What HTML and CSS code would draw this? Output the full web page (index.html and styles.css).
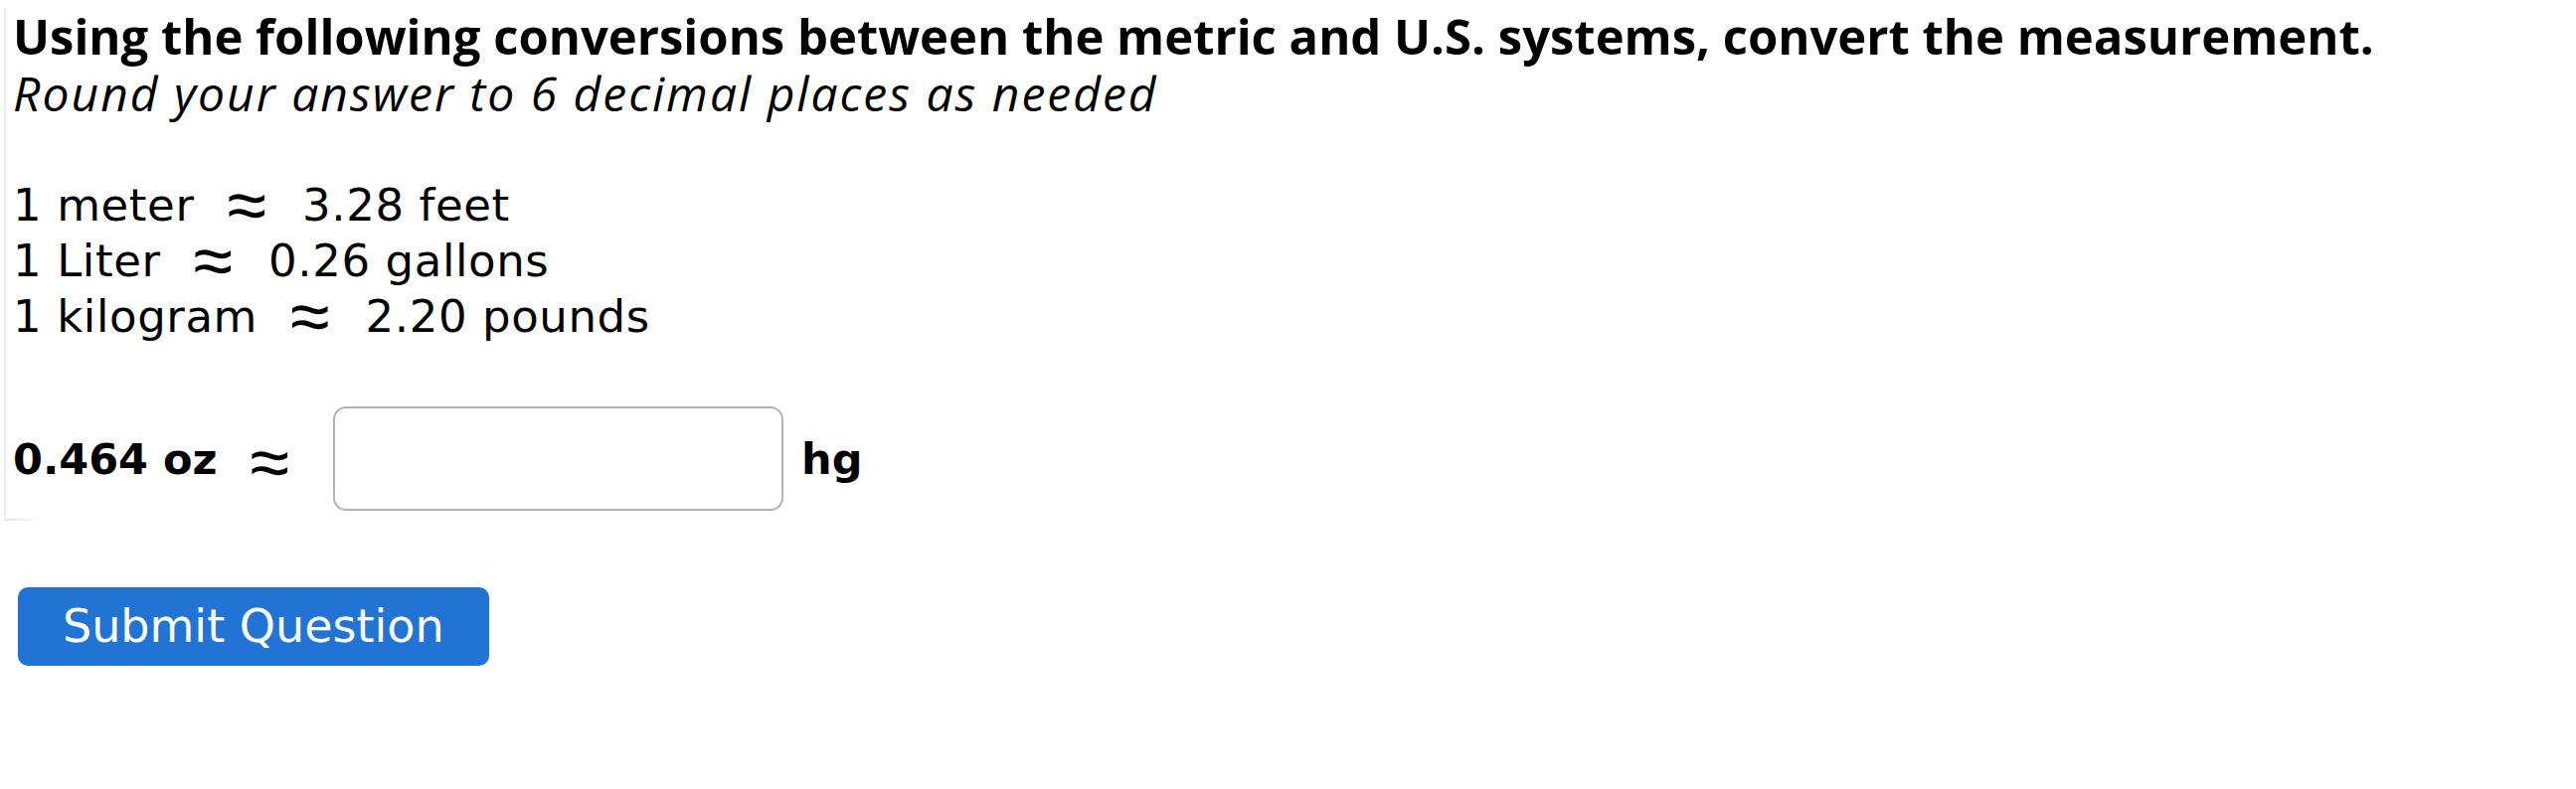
FILE: index.html
```html
<!DOCTYPE html>
<html>
<head>
<meta charset="utf-8">
<link rel="stylesheet" href="styles.css">
</head>
<body>
<div class="question">
  <div class="prompt">
    <div class="title">Using the following conversions between the metric and U.S. systems, convert the measurement.</div>
    <div class="hint">Round your answer to 6 decimal places as needed</div>
  </div>
  <div class="facts">
    <div class="fact">1 meter<span class="approx">≈</span>3.28 feet</div>
    <div class="fact">1 Liter<span class="approx">≈</span>0.26 gallons</div>
    <div class="fact">1 kilogram<span class="approx">≈</span>2.20 pounds</div>
  </div>
  <div class="answer-row">
    <span class="given">0.464 oz</span>
    <span class="approx approx-row">≈</span>
    <input class="answer" type="text" aria-label="answer">
    <span class="unit">hg</span>
  </div>
</div>
<div class="actions">
  <button class="submit" type="button">Submit Question</button>
</div>
</body>
</html>
```

FILE: styles.css
```css
html, body {
  margin: 0;
  padding: 0;
  background: #ffffff;
  color: #000000;
}

.question {
  margin: 8px 0 0 4px;
  border-left: 2px solid #ececec;
  padding: 0 0 10px 7px;
  position: relative;
}

.question::after {
  content: "";
  position: absolute;
  left: 0;
  bottom: 0;
  width: 34px;
  height: 2px;
  background: linear-gradient(to right, #e4e4e4, rgba(236,236,236,0));
}

.title {
  font-family: "Open Sans", "Noto Sans", sans-serif;
  font-weight: 700;
  font-size: 49px;
  line-height: 57px;
  white-space: nowrap;
}

.hint {
  font-family: "Open Sans", "Noto Sans", sans-serif;
  font-style: italic;
  font-size: 48px;
  letter-spacing: 2px;
  line-height: 57px;
  white-space: nowrap;
}

.facts {
  margin-top: 57px;
  font-family: "DejaVu Sans", "Verdana", sans-serif;
  font-size: 45px;
  line-height: 56px;
  letter-spacing: 0.6px;
}

.fact {
  white-space: nowrap;
}

.approx {
  font-family: "DejaVu Sans", sans-serif;
  font-weight: 200;
  font-size: 72px;
  line-height: 0;
  vertical-align: -9px;
  letter-spacing: 0;
  margin: 0 36px 0 33px;
}

.answer-row {
  display: flex;
  align-items: center;
  margin-top: 62px;
  font-family: "DejaVu Sans", "Verdana", sans-serif;
  font-size: 43px;
  font-weight: 700;
  height: 105px;
}

.approx-row {
  margin: 6px 44px 0 33px;
}

.answer {
  box-sizing: border-box;
  width: 453px;
  height: 105px;
  border: 2px solid #b3b3b3;
  border-radius: 13px;
  background: #ffffff;
  margin: 0 18px 0 0;
  padding: 0 12px;
  font-size: 40px;
  outline: none;
}

.actions {
  padding: 67px 0 0 18px;
}

.submit {
  box-sizing: border-box;
  height: 79px;
  padding: 0 45px;
  border: none;
  border-radius: 10px;
  background: #2174d4;
  color: #ffffff;
  font-family: "DejaVu Sans", "Verdana", sans-serif;
  font-size: 46px;
  line-height: 79px;
}
```
